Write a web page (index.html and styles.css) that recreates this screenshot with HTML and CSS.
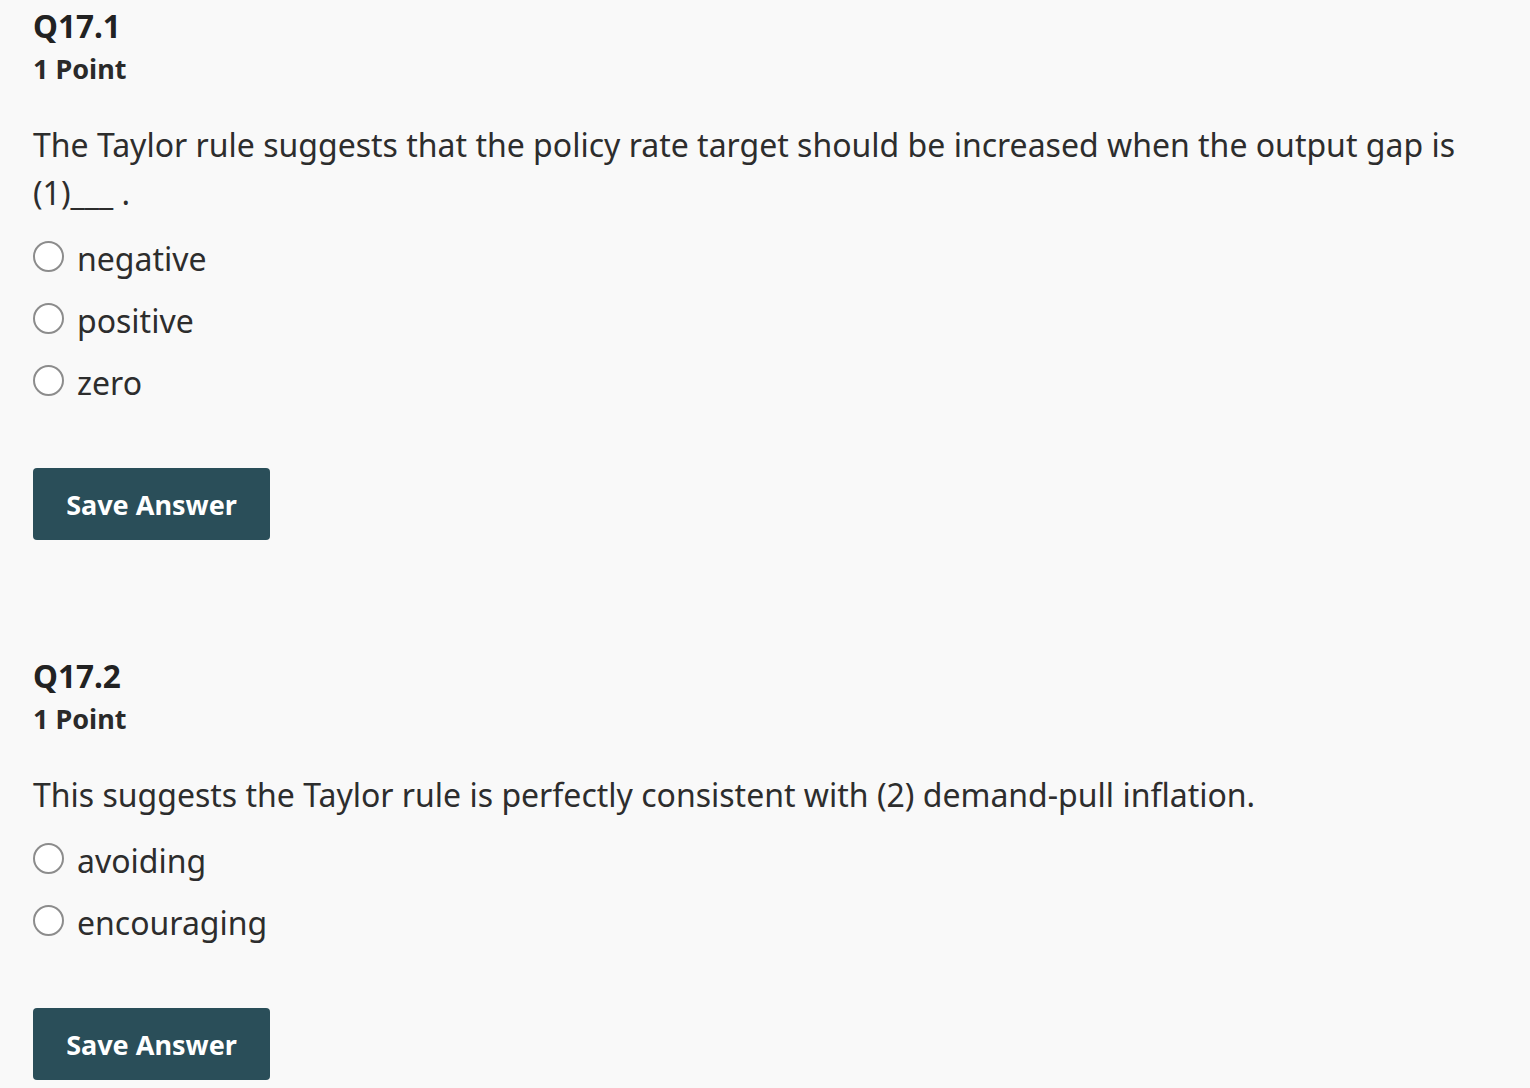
FILE: index.html
```
<!DOCTYPE html>
<html lang="en">
<head>
  <meta charset="UTF-8">
  <meta name="viewport" content="width=device-width, initial-scale=1.0">
  <title>Q17</title>
  <link rel="stylesheet" href="styles.css">
</head>
<body>
  <div class="container">
    <div class="question">
      <h2 class="q-title">Q17.1</h2>
      <div class="q-points">1 Point</div>
      <p class="q-text">The Taylor rule suggests that the policy rate target should be increased when the output gap is (1)___ .</p>
      <div class="options">
        <label class="option"><input type="radio" name="q171" value="negative" /><span class="radio"></span>negative</label>
        <label class="option"><input type="radio" name="q171" value="positive" /><span class="radio"></span>positive</label>
        <label class="option"><input type="radio" name="q171" value="zero" /><span class="radio"></span>zero</label>
      </div>
      <button type="button" class="save-btn">Save Answer</button>
    </div>

    <div class="question">
      <h2 class="q-title">Q17.2</h2>
      <div class="q-points">1 Point</div>
      <p class="q-text">This suggests the Taylor rule is perfectly consistent with (2) demand-pull inflation.</p>
      <div class="options">
        <label class="option"><input type="radio" name="q172" value="avoiding" /><span class="radio"></span>avoiding</label>
        <label class="option"><input type="radio" name="q172" value="encouraging" /><span class="radio"></span>encouraging</label>
      </div>
      <button type="button" class="save-btn">Save Answer</button>
    </div>
  </div>
</body>
</html>
```

FILE: styles.css
```
body {
  margin: 0;
  background: #f9f9f9;
  font-family: "Noto Sans", "Open Sans", sans-serif;
  color: #2d2d2d;
}

.container {
  padding: 4px 33px 0;
}

.question {
  margin-bottom: 114px;
}

.q-title {
  margin: 0;
  font-size: 31.5px;
  line-height: 44px;
  font-weight: bold;
  color: #222;
}

.q-points {
  margin-top: 1px;
  font-size: 27px;
  line-height: 40px;
  font-weight: bold;
  color: #2a2a2a;
}

.q-text {
  margin: 32px 0 0;
  font-size: 32px;
  line-height: 48px;
}

.options {
  margin-top: 10px;
}

.option {
  display: flex;
  align-items: center;
  height: 62px;
  font-size: 32px;
}

.option input {
  display: none;
}

.radio {
  width: 27px;
  height: 27px;
  border: 2px solid #8c8c8c;
  border-radius: 50%;
  background: #fff;
  margin-right: 13px;
  position: relative;
  top: -2px;
}

.save-btn {
  display: block;
  margin-top: 55px;
  width: 237px;
  height: 72px;
  border: none;
  border-radius: 4px;
  background: #2a4e59;
  color: #fff;
  font-family: "Noto Sans", "Open Sans", sans-serif;
  font-size: 27px;
  font-weight: bold;
}
```
